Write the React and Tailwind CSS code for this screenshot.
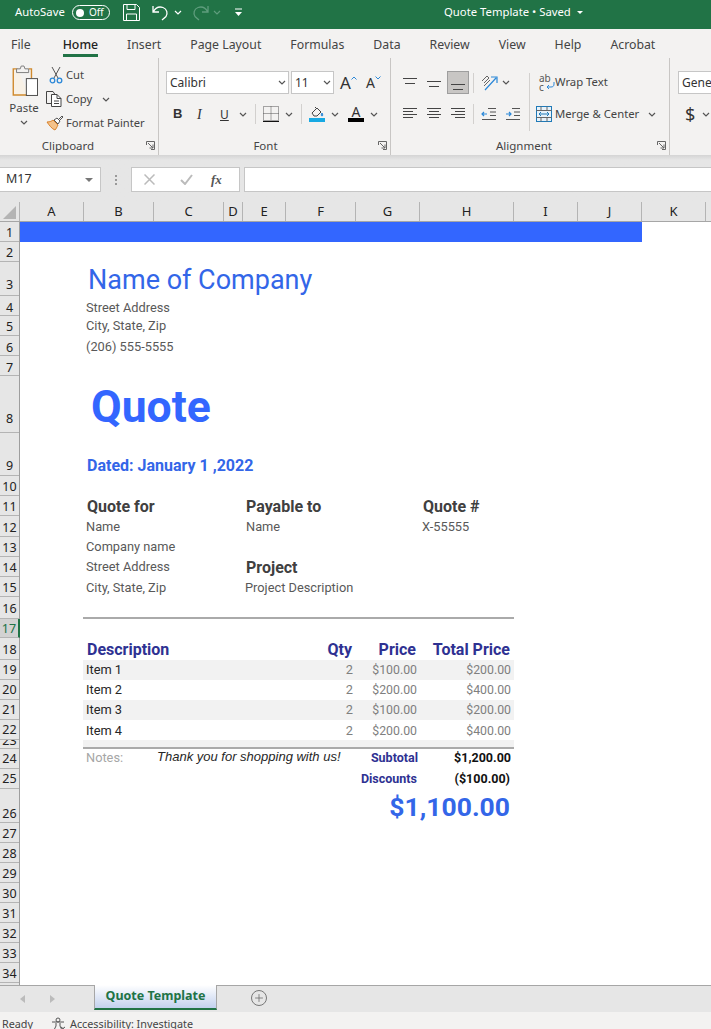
import { Plus } from "lucide-react";

const uiFont = "font-['Noto_Sans',sans-serif]";
const sheetFont = "font-['Roboto',sans-serif]";

const columns = [
  ["A", "w-[64px]"],
  ["B", "w-[70px]"],
  ["C", "w-[70px]"],
  ["D", "w-[19px]"],
  ["E", "w-[43px]"],
  ["F", "w-[70px]"],
  ["G", "w-[64px]"],
  ["H", "w-[94px]"],
  ["I", "w-[64px]"],
  ["J", "w-[64px]"],
  ["K", "w-[64px]"],
];

// row number, height, and how far the label sits off the bottom edge
const rows = [
  [1, "h-[20px] pb-[1px]"], [2, "h-[20px] pb-[1px]"], [3, "h-[34px] pb-[3px]"], [4, "h-[20px] pb-0"],
  [5, "h-[20px] pb-[1px]"], [6, "h-[20px] pb-0"], [7, "h-[20px] pb-0"], [8, "h-[57px] pb-[6px]"],
  [9, "h-[43px] pb-[2px]"], [10, "h-[20px] pb-[1px]"], [11, "h-[20px] pb-[1px]"], [12, "h-[21px] pb-[1px]"],
  [13, "h-[20px] pb-[1px]"], [14, "h-[20px] pb-[1px]"], [15, "h-[20px] pb-[1px]"], [16, "h-[22px] pb-[2px]"],
  [17, "h-[19px] pb-[1px]"], [18, "h-[22px] pb-[2px]"], [19, "h-[20px] pb-[2px]"], [20, "h-[20px] pb-[2px]"],
  [21, "h-[20px] pb-[2px]"], [22, "h-[20px] pb-[2px]"], [23, "h-[9px]"], [24, "h-[20px] pb-[2px]"],
  [25, "h-[20px] pb-[2px]"], [26, "h-[34px] pb-[1px]"], [27, "h-[20px] pb-[1px]"], [28, "h-[20px] pb-[1px]"],
  [29, "h-[20px] pb-[1px]"], [30, "h-[20px] pb-[1px]"], [31, "h-[20px] pb-[1px]"], [32, "h-[20px] pb-[1px]"],
  [33, "h-[20px] pb-[1px]"], [34, "h-[20px] pb-[1px]"],
];

const items = [
  { name: "Item 1", row: "row-start-19", pad: "pb-[2px]", price: "$100.00", total: "$200.00" },
  { name: "Item 2", row: "row-start-20", pad: "pb-[2px]", price: "$200.00", total: "$400.00" },
  { name: "Item 3", row: "row-start-21", pad: "pb-[2px]", price: "$100.00", total: "$200.00" },
  { name: "Item 4", row: "row-start-22", pad: "pb-[1px]", price: "$200.00", total: "$400.00" },
];

function Chev({ className = "" }) {
  return (
    <svg width="8" height="5" viewBox="0 0 8 5" className={`shrink-0 ${className}`} fill="none" stroke="#555" strokeWidth="1.2">
      <path d="M1 1l3 3 3-3" />
    </svg>
  );
}

function Sep({ className = "h-[20px]" }) {
  return <div className={`w-px shrink-0 bg-[#d2d0ce] ${className}`} />;
}

function Lines({ widths, gap = 5, y = 3 }) {
  return (
    <svg width="16" height="16" viewBox="0 0 16 16" stroke="#444" strokeWidth="1" className="shrink-0">
      {widths.map(([a, b], i) => (
        <path key={i} d={`M${a} ${y + i * gap + 0.5}H${b}`} />
      ))}
    </svg>
  );
}

function Launcher() {
  return (
    <svg width="9" height="9" viewBox="0 0 9 9" fill="none" stroke="#666" className="shrink-0">
      <path d="M.5 4V.5h8v8H5" />
      <path d="M2 2l5 5M7 3.5V7H3.5" />
    </svg>
  );
}

function GroupLabel({ label, className }) {
  return (
    <div className={`relative flex h-[18px] items-center justify-center text-[11.5px] text-[#444] ${className}`}>
      {label}
      <span className="absolute right-[3px] top-[4px]">
        <Launcher />
      </span>
    </div>
  );
}

function TitleBar() {
  return (
    <div className="flex h-[29px] shrink-0 items-center bg-[#217346] pb-[4px] text-[11.3px] text-white">
      <span className="ml-[15px] w-[51px]">AutoSave</span>
      <div className="ml-[6px] flex h-[15px] w-[38px] items-center rounded-full border border-white pl-[3px] text-[10px]">
        <span className="h-[8px] w-[8px] rounded-full bg-white" />
        <span className="ml-[5px]">Off</span>
      </div>
      <svg width="17" height="17" viewBox="0 0 17 17" fill="none" stroke="#fff" className="ml-[13px] shrink-0">
        <path d="M.5.5h13l3 3v13H.5z" />
        <path d="M4 .5v5h8v-5M3.5 16.5V10h10v6.5" />
      </svg>
      <svg width="17" height="17" viewBox="0 0 17 17" fill="none" stroke="#fff" strokeWidth="1.3" className="ml-[12px] shrink-0">
        <path d="M1 2v6h6M1.5 7.5C4 3 8 2.500 11 3.500c4 1.500 5 6 3 9l-4 3.500" />
      </svg>
      <Chev className="ml-[5px] [&_path]:stroke-white" />
      <svg width="17" height="17" viewBox="0 0 17 17" fill="none" stroke="#5f9d7d" strokeWidth="1.3" className="ml-[10px] shrink-0">
        <path d="M16 2v6h-6M15.500 7.500C13 3 9 2.500 6 3.500c-4 1.500-5 6-3 9l4 3.500" />
      </svg>
      <Chev className="ml-[4px] [&_path]:stroke-[#5f9d7d]" />
      <svg width="9" height="9" viewBox="0 0 9 9" className="ml-[13px] shrink-0" fill="#fff">
        <path d="M1 .5h7v1H1zM1 4h7L4.500 8z" />
      </svg>
      <span className="ml-[201px] whitespace-nowrap">Quote Template • Saved</span>
      <svg width="6" height="3" viewBox="0 0 6 3" fill="#fff" className="ml-[6px]">
        <path d="M0 0h6L3 3z" />
      </svg>
    </div>
  );
}

function Tabs() {
  const tabs = ["File", "Home", "Insert", "Page Layout", "Formulas", "Data", "Review", "View", "Help", "Acrobat"];
  return (
    <div className="flex h-[29px] shrink-0 items-start gap-[29px] bg-[#f3f2f1] pl-[11px] pt-[7px] text-[12.3px] text-[#444]">
      {tabs.map((tab) =>
        tab === "Home" ? (
          <span key={tab} className="ml-[3px] h-[21px] border-b-[3px] border-[#217346] font-medium text-[#222]">
            {tab}
          </span>
        ) : (
          <span key={tab}>{tab}</span>
        )
      )}
    </div>
  );
}

function ClipboardGroup() {
  return (
    <div className="flex w-[159px] shrink-0 flex-col border-r border-[#c8c6c4]">
      <div className="flex h-[79px] pl-[8px] pt-[7px]">
        <div className="flex w-[32px] flex-col items-center">
          <svg width="28" height="31" viewBox="0 0 30 33" fill="none">
            <path d="M8 4H3.500v28H20" stroke="#d08a2e" strokeWidth="1.500" fill="#f8f1e6" />
            <path d="M20 4h3v10" stroke="#d08a2e" strokeWidth="1.500" />
            <path d="M7 8V4h4l1-3h3l1 3h4v4z" stroke="#777" fill="#f3f2f1" />
            <rect x="17.500" y="14.500" width="12" height="18" stroke="#444" fill="#fff" />
          </svg>
          <span className="mt-[4px] text-[11.5px] leading-[16px] text-[#444]">Paste</span>
          <Chev className="mt-[4px]" />
        </div>
        <div className="ml-[6px] flex flex-col gap-[4px] text-[11.2px] leading-[20px] text-[#444]">
          <div className="flex h-[20px] items-center">
            <svg width="14" height="18" viewBox="0 0 14 18" fill="none" className="ml-[3px] shrink-0">
              <path d="M3 1l6 11M11 1L5 12" stroke="#555" />
              <circle cx="3.500" cy="14.500" r="2.300" stroke="#2b88d8" strokeWidth="1.300" />
              <circle cx="10.500" cy="14.500" r="2.300" stroke="#2b88d8" strokeWidth="1.300" />
            </svg>
            <span className="ml-[3px]">Cut</span>
          </div>
          <div className="flex h-[20px] items-center">
            <svg width="16" height="16" viewBox="0 0 16 16" fill="none" stroke="#444" className="shrink-0">
              <path d="M6 12.500H.5V.5H7l2 3" />
              <path d="M5.500 3.500H11l4 4v8H5.500z" fill="#fff" />
              <path d="M11 3.500v4h4M8 10h5M8 12.500h5" />
            </svg>
            <span className="ml-[4px]">Copy</span>
            <Chev className="ml-[10px]" />
          </div>
          <div className="flex h-[20px] items-center">
            <svg width="18" height="16" viewBox="0 0 18 16" fill="none" className="shrink-0">
              <path d="M1 7c3 0 5-1 6-2l5 5c-1 2-2 4-3 5C6 14 3 10 1 7z" fill="#f4c28a" stroke="#d9822b" />
              <path d="M8 5l3-2 3 3-2 3z" fill="#fff" stroke="#555" />
              <path d="M13 4l3-3 1 1-3 3" stroke="#555" />
            </svg>
            <span className="ml-[2px] whitespace-nowrap">Format Painter</span>
          </div>
        </div>
      </div>
      <GroupLabel label="Clipboard" className="pr-[22px]" />
    </div>
  );
}

function FontGroup() {
  return (
    <div className="flex w-[232px] shrink-0 flex-col border-r border-[#c8c6c4]">
      <div className="h-[79px] pl-[7px] pt-[13px] text-[#333]">
        <div className="flex items-center">
          <div className="flex h-[23px] w-[123px] items-center justify-between border border-[#c6c6c6] bg-white pl-[3px] pr-[2px] text-[12px]">
            Calibri
            <Chev />
          </div>
          <div className="ml-[2px] flex h-[23px] w-[43px] items-center justify-between border border-[#c6c6c6] bg-white pl-[3px] pr-[2px] text-[12px]">
            11
            <Chev />
          </div>
          <span className="ml-[6px] text-[17px] leading-none">A</span>
          <svg width="6" height="4" viewBox="0 0 6 4" fill="none" stroke="#2b88d8" className="mb-[9px]">
            <path d="M.5 3.500L3 1l2.500 2.500" />
          </svg>
          <span className="ml-[9px] text-[14px] leading-none">A</span>
          <svg width="6" height="4" viewBox="0 0 6 4" fill="none" stroke="#2b88d8" className="mb-[9px]">
            <path d="M.5.500L3 3l2.500-2.500" />
          </svg>
        </div>
        <div className="mt-[9px] flex h-[22px] items-center">
          <span className="ml-[7px] w-[9px] font-['Liberation_Sans',sans-serif] text-[13px] font-bold">B</span>
          <span className="ml-[15px] w-[6px] font-['Liberation_Serif',serif] text-[14px] italic">I</span>
          <span className="ml-[17px] w-[9px] text-[12px] leading-[15px] underline">U</span>
          <Chev className="ml-[10px]" />
          <Sep className="ml-[8px] h-[20px]" />
          <svg width="16" height="16" viewBox="0 0 16 16" fill="none" stroke="#555" strokeDasharray="1 1" className="ml-[7px] shrink-0">
            <path d="M.5.500h15v14H.500zM8 .5v14M.5 7.500h15" />
            <path d="M0 15.500h16" stroke="#111" strokeDasharray="none" />
          </svg>
          <Chev className="ml-[6px]" />
          <Sep className="ml-[8px] h-[20px]" />
          <div className="ml-[7px] flex w-[16px] shrink-0 flex-col items-center">
            <svg width="14" height="12" viewBox="0 0 14 12" fill="none" stroke="#444">
              <path d="M2 7l5-5 4 4-4 4H4zM5 1l2 2" />
              <path d="M12 7c1 1.500 1 3 0 3s-1-1.500 0-3z" fill="#2b88d8" stroke="#2b88d8" />
            </svg>
            <div className="h-[4px] w-[16px] bg-[#17a9e3]" />
          </div>
          <Chev className="ml-[6px]" />
          <div className="ml-[9px] flex w-[16px] shrink-0 flex-col items-center leading-[12px]">
            <span className="text-[14px] leading-[12px]">A</span>
            <div className="h-[4px] w-[16px] bg-black" />
          </div>
          <Chev className="ml-[6px]" />
        </div>
      </div>
      <GroupLabel label="Font" className="pr-[18px]" />
    </div>
  );
}

function AlignmentGroup() {
  return (
    <div className="flex w-[279px] shrink-0 flex-col border-r border-[#c8c6c4]">
      <div className="h-[79px] pl-[11px] pt-[13px] text-[11.3px] text-[#444]">
        <div className="flex h-[23px] items-center">
          <Lines widths={[[1, 15], [3, 13]]} y={3} />
          <span className="w-[8px] shrink-0" />
          <Lines widths={[[1, 15], [3, 13]]} y={6} />
          <div className="ml-[5px] flex h-[23px] w-[22px] shrink-0 items-center justify-center border border-[#9e9e9e] bg-[#c8c6c4]">
            <Lines widths={[[1, 15], [3, 13]]} y={9} />
          </div>
          <Sep className="ml-[4px] h-[20px]" />
          <svg width="17" height="17" viewBox="0 0 17 17" fill="none" className="ml-[7px] shrink-0">
            <path d="M1 7l5-5 2 2-5 5M3 12l6-6" stroke="#666" />
            <path d="M4 16L15 4M10 3h6v6" stroke="#2b88d8" strokeWidth="1.200" />
          </svg>
          <Chev className="ml-[4px]" />
          <Sep className="ml-[19px] h-[58px] translate-y-[19px]" />
          <span className="ml-[9px] w-[12px] shrink-0 text-[10px] leading-[9px] text-[#555]">
            ab
            <br />c
          </span>
          <svg width="9" height="8" viewBox="0 0 9 8" fill="none" stroke="#2b88d8" className="-ml-[5px] mt-[7px] shrink-0">
            <path d="M8 0v2c0 2-1 3-3 3H1M3 3L1 5l2 2" />
          </svg>
          <span className="whitespace-nowrap">Wrap Text</span>
        </div>
        <div className="mt-[9px] flex h-[22px] items-center">
          <Lines widths={[[1, 15], [1, 11], [1, 15], [1, 11]]} gap={3} y={2} />
          <span className="w-[8px] shrink-0" />
          <Lines widths={[[1, 15], [3, 13], [1, 15], [3, 13]]} gap={3} y={2} />
          <span className="w-[8px] shrink-0" />
          <Lines widths={[[1, 15], [5, 15], [1, 15], [5, 15]]} gap={3} y={2} />
          <Sep className="ml-[7px] h-[20px]" />
          <svg width="16" height="14" viewBox="0 0 16 14" fill="none" className="ml-[7px] shrink-0">
            <path d="M7 1.500h8M9 5h6M9 8.500h6M1 12.500h14" stroke="#555" />
            <path d="M6 7H1M3 5L1 7l2 2" stroke="#2b88d8" strokeWidth="1.200" />
          </svg>
          <svg width="16" height="14" viewBox="0 0 16 14" fill="none" className="ml-[8px] shrink-0">
            <path d="M7 1.500h8M9 5h6M9 8.500h6M1 12.500h14" stroke="#555" />
            <path d="M1 7h5M4 5l2 2-2 2" stroke="#2b88d8" strokeWidth="1.200" />
          </svg>
          <svg width="16" height="16" viewBox="0 0 16 16" fill="none" className="ml-[15px] shrink-0">
            <rect x=".5" y=".5" width="15" height="15" stroke="#1f7ab8" fill="#e8f2f9" />
            <path d="M.5 4.500h15M.5 11.500h15M5 .5v4M11 .5v4M5 11.500v4M11 11.500v4" stroke="#666" />
            <path d="M3 8h10M5 6L3 8l2 2M11 6l2 2-2 2" stroke="#1f7ab8" />
          </svg>
          <span className="ml-[3px] whitespace-nowrap">Merge &amp; Center</span>
          <Chev className="ml-[9px]" />
        </div>
      </div>
      <GroupLabel label="Alignment" className="pr-[12px]" />
    </div>
  );
}

function NumberGroup() {
  return (
    <div className="pl-[8px] pt-[13px] text-[12px] text-[#333]">
      <div className="flex h-[23px] w-[60px] items-center border border-[#c6c6c6] bg-white pl-[3px]">General</div>
      <div className="mt-[9px] flex h-[22px] items-center pl-[7px] text-[18px]">
        $
        <Chev className="ml-[7px]" />
      </div>
    </div>
  );
}

function FormulaBar() {
  return (
    <div className="flex h-[47px] shrink-0 bg-[#e6e6e6] bg-gradient-to-b from-[#d4d4d4] to-[#e6e6e6] to-[5px] pt-[12px]">
      <div className="flex h-[25px] w-[101px] items-center justify-between border border-l-0 border-[#c6c6c6] bg-white pl-[6px] pr-[7px] text-[12.5px] text-[#333]">
        M17
        <svg width="8" height="4" viewBox="0 0 8 4" fill="#777">
          <path d="M0 0h8L4 4z" />
        </svg>
      </div>
      <div className="ml-[14px] flex h-[25px] flex-col items-center justify-center gap-[2px]">
        <span className="h-[2px] w-[2px] bg-[#999]" />
        <span className="h-[2px] w-[2px] bg-[#999]" />
        <span className="h-[2px] w-[2px] bg-[#999]" />
      </div>
      <div className="ml-[14px] flex h-[25px] w-[109px] items-center border border-[#c6c6c6] bg-white">
        <svg width="11" height="11" viewBox="0 0 11 11" stroke="#bbb" strokeWidth="1.500" className="ml-[12px] shrink-0">
          <path d="M.5.500l10 10M10.500.500l-10 10" />
        </svg>
        <svg width="13" height="11" viewBox="0 0 13 11" fill="none" stroke="#bbb" strokeWidth="2" className="ml-[25px] shrink-0">
          <path d="M1 6l4 4 7-9" />
        </svg>
        <span className="ml-[18px] font-['Liberation_Serif',serif] text-[13px] font-bold italic text-[#555]">fx</span>
      </div>
      <div className="ml-[4px] h-[25px] flex-1 border border-r-0 border-[#c6c6c6] bg-white" />
    </div>
  );
}

function ColumnHeader() {
  return (
    <div className={`flex h-[20px] shrink-0 border-b border-[#a6a6a6] bg-[#e6e6e6] text-[13px] text-[#222] ${uiFont}`}>
      <div className="flex w-[20px] shrink-0 items-end justify-end border-r border-[#b4b4b4] pb-[2px] pr-[3px]">
        <svg width="13" height="13" viewBox="0 0 13 13" fill="#b4b4b4">
          <path d="M13 0v13H0z" />
        </svg>
      </div>
      {columns.map(([letter, width]) => (
        <div key={letter} className={`flex shrink-0 items-center justify-center border-r border-[#b4b4b4] ${width}`}>
          {letter}
        </div>
      ))}
    </div>
  );
}

function RowHeader() {
  return (
    <div className={`w-[20px] shrink-0 border-r border-[#9e9e9e] bg-[#e6e6e6] text-[12.5px] leading-[14px] text-[#222] ${uiFont}`}>
      {rows.map(([n, size]) =>
        n === 17 ? (
          <div key={n} className={`-mr-px flex items-end justify-center overflow-hidden border-b border-r-2 border-[#b4b4b4] border-r-[#217346] bg-[#d2d2d2] text-[#217346] ${size}`}>
            {n}
          </div>
        ) : (
          <div key={n} className={`flex items-end justify-center overflow-hidden border-b border-[#b4b4b4] ${size}`}>
            {n}
          </div>
        )
      )}
    </div>
  );
}

function Cell({ at, className = "", children }) {
  return <div className={`flex items-end whitespace-nowrap ${at} ${className}`}>{children}</div>;
}

function Sheet() {
  return (
    <div className={`grid flex-1 grid-cols-[64px_70px_70px_19px_43px_70px_64px_94px_64px_64px_64px_1fr] grid-rows-[20px_20px_34px_20px_20px_20px_20px_57px_43px_20px_20px_21px_20px_20px_20px_22px_19px_22px_20px_20px_20px_20px_9px_20px_20px_34px] bg-white text-[12.8px] leading-[16px] text-[#595959] ${sheetFont}`}>
      <div className="col-start-1 col-end-11 row-start-1 bg-[#3366ff]" />

      <Cell at="col-start-2 row-start-3" className="pl-[4px] text-[27px] leading-[32px] text-[#3366e8]">Name of Company</Cell>
      <Cell at="col-start-2 row-start-4" className="pl-[2px]">Street Address</Cell>
      <Cell at="col-start-2 row-start-5" className="pb-[2px] pl-[2px]">City, State, Zip</Cell>
      <Cell at="col-start-2 row-start-6" className="pb-[1px] pl-[2px]">(206) 555-5555</Cell>
      <Cell at="col-start-2 row-start-8" className="pl-[7px] text-[44.5px] font-bold leading-[52px] text-[#3366ff]">Quote</Cell>
      <Cell at="col-start-2 row-start-9" className="pl-[3px] text-[16px] font-bold leading-[20px] text-[#3366e8]">Dated: January 1 ,2022</Cell>

      <Cell at="col-start-2 row-start-11" className="pl-[3px] text-[16px] font-bold leading-[18px] text-[#404040]">Quote for</Cell>
      <Cell at="col-start-5 row-start-11" className="pl-[3px] text-[16px] font-bold leading-[18px] text-[#404040]">Payable to</Cell>
      <Cell at="col-start-8 row-start-11" className="pl-[3px] text-[16px] font-bold leading-[18px] text-[#404040]">Quote #</Cell>
      <Cell at="col-start-2 row-start-12" className="pb-[2px] pl-[2px]">Name</Cell>
      <Cell at="col-start-5 row-start-12" className="pb-[2px] pl-[3px]">Name</Cell>
      <Cell at="col-start-8 row-start-12" className="pb-[2px] pl-[2px]">X-55555</Cell>
      <Cell at="col-start-2 row-start-13" className="pb-[2px] pl-[2px]">Company name</Cell>
      <Cell at="col-start-2 row-start-14" className="pb-[2px] pl-[2px]">Street Address</Cell>
      <Cell at="col-start-5 row-start-14" className="pl-[3px] text-[16px] font-bold leading-[18px] text-[#404040]">Project</Cell>
      <Cell at="col-start-2 row-start-15" className="pb-[1px] pl-[2px]">City, State, Zip</Cell>
      <Cell at="col-start-5 row-start-15" className="pb-[1px] pl-[2px]">Project Description</Cell>
      <div className="col-start-2 col-end-9 row-start-16 -ml-px border-b-2 border-[#aaaaaa]" />

      <Cell at="col-start-2 row-start-18" className="pl-[3px] text-[16px] font-bold leading-[20px] text-[#2e3192]">Description</Cell>
      <Cell at="col-start-6 row-start-18" className="justify-end pr-[4px] text-[16px] font-bold leading-[20px] text-[#2e3192]">Qty</Cell>
      <Cell at="col-start-7 row-start-18" className="justify-end pr-[4px] text-[16px] font-bold leading-[20px] text-[#2e3192]">Price</Cell>
      <Cell at="col-start-8 row-start-18" className="justify-end pr-[4px] text-[16px] font-bold leading-[20px] text-[#2e3192]">Total Price</Cell>

      <div className="col-start-2 col-end-9 row-start-19 -ml-px bg-[#f2f2f2]" />
      <div className="col-start-2 col-end-9 row-start-21 -ml-px bg-[#f2f2f2]" />
      {items.map((item) => (
        <div key={item.name} className="contents">
          <Cell at={`col-start-2 ${item.row} ${item.pad}`} className="pl-[2px] text-[#262626]">{item.name}</Cell>
          <Cell at={`col-start-6 ${item.row} ${item.pad}`} className="justify-end pr-[3px] text-[#7f7f7f]">2</Cell>
          <Cell at={`col-start-7 ${item.row} ${item.pad}`} className="justify-end pr-[3px] text-[12.3px] text-[#7f7f7f]">{item.price}</Cell>
          <Cell at={`col-start-8 ${item.row} ${item.pad}`} className="justify-end pr-[3px] text-[12.3px] text-[#7f7f7f]">{item.total}</Cell>
        </div>
      ))}
      <div className="col-start-2 col-end-9 row-start-23 -ml-px border-b-2 border-[#aaaaaa] bg-[#f2f2f2]" />

      <Cell at="col-start-2 row-start-24" className="pb-[3px] pl-[2px] text-[#a6a6a6]">Notes:</Cell>
      <Cell at="col-start-3 row-start-24" className="pb-[4px] pl-[3px] font-['Liberation_Sans',sans-serif] text-[13px] italic text-[#262626]">Thank you for shopping with us!</Cell>
      <Cell at="col-start-7 row-start-24" className="justify-end pb-[3px] pr-[2px] text-[12.5px] font-bold text-[#2e3192]">Subtotal</Cell>
      <Cell at="col-start-8 row-start-24" className="justify-end pb-[3px] pr-[3px] text-[12.5px] font-bold text-[#111]">$1,200.00</Cell>
      <Cell at="col-start-7 row-start-25" className="justify-end pb-[2px] pr-[3px] text-[12.5px] font-bold text-[#2e3192]">Discounts</Cell>
      <Cell at="col-start-8 row-start-25" className="justify-end pb-[2px] pr-[4px] text-[12.5px] font-bold text-[#111]">($100.00)</Cell>
      <Cell at="col-start-8 row-start-26" className="justify-end pr-[4px] text-[26.5px] font-bold leading-[32px] text-[#3366e8]">$1,100.00</Cell>
    </div>
  );
}

function SheetTabs() {
  return (
    <div className="flex h-[27px] shrink-0 items-start border-t border-[#a6a6a6] bg-[#e6e6e6]">
      <svg width="6" height="8" viewBox="0 0 6 8" fill="#bbb" className="ml-[20px] mt-[9px] shrink-0">
        <path d="M5 0v8L0 4z" />
      </svg>
      <svg width="6" height="8" viewBox="0 0 6 8" fill="#bbb" className="ml-[23px] mt-[9px] shrink-0">
        <path d="M1 0v8l5-4z" />
      </svg>
      <div className={`-mt-px ml-[39px] flex h-[25px] w-[123px] items-center justify-center border-x border-b-2 border-x-[#a6a6a6] border-b-[#217346] bg-gradient-to-b from-white to-[#c3d1ee] text-[12.5px] font-bold text-[#217346] ${uiFont}`}>
        Quote Template
      </div>
      <div className="ml-[34px] mt-[4px] flex h-[16px] w-[16px] items-center justify-center rounded-full border border-[#777]">
        <Plus size={12} color="#666" strokeWidth={1.5} />
      </div>
    </div>
  );
}

function StatusBar() {
  return (
    <div className={`flex h-[17px] shrink-0 items-start bg-[#f3f2f1] pl-[2px] pt-[2px] text-[10.8px] leading-[20px] text-[#444] ${uiFont}`}>
      <span>Ready</span>
      <svg width="15" height="14" viewBox="0 0 15 14" fill="none" stroke="#555" className="ml-[18px] mt-[3px] shrink-0">
        <circle cx="7" cy="3" r="2" />
        <path d="M1 5h12M5 6v3l-2 4M9 6v3l2 4" />
        <path d="M10 10l4 3M14 10l-4 3" />
      </svg>
      <span className="ml-[4px]">Accessibility: Investigate</span>
    </div>
  );
}

export default function App() {
  return (
    <div className={`flex h-[1029px] w-[711px] flex-col overflow-hidden bg-white ${uiFont}`}>
      <TitleBar />
      <Tabs />
      <div className="flex h-[97px] shrink-0 bg-[#f3f2f1]">
        <ClipboardGroup />
        <FontGroup />
        <AlignmentGroup />
        <NumberGroup />
      </div>
      <FormulaBar />
      <ColumnHeader />
      <div className="flex min-h-0 flex-1 overflow-hidden">
        <RowHeader />
        <Sheet />
      </div>
      <SheetTabs />
      <StatusBar />
    </div>
  );
}
